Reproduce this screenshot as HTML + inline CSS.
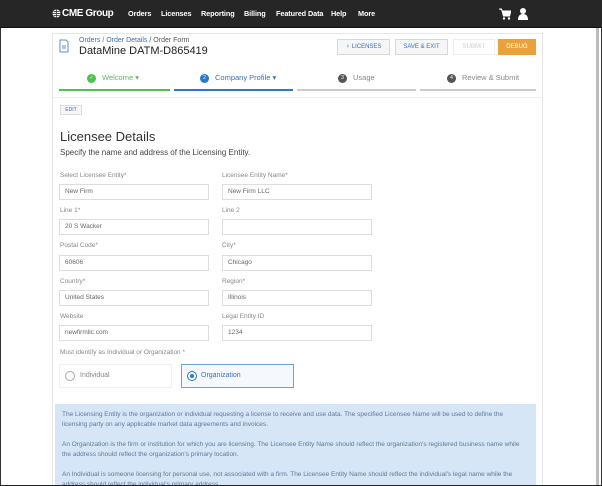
<!DOCTYPE html>
<html style="overflow:hidden;height:486px"><head><meta charset="utf-8"><style>
*{box-sizing:border-box;margin:0;padding:0}
body{width:602px;height:486px;overflow:hidden;background:#fff;font-family:"Liberation Sans",sans-serif;position:relative;color:#333}
.a{position:absolute}
.nav{left:0;top:0;width:602px;height:28px;background:#262626;border-bottom:1px solid #111}
.nav span{position:absolute;top:9px;color:#fff;font-size:7.3px;font-weight:bold;letter-spacing:-0.1px}
.card{left:52px;top:33px;width:491px;height:453px;border:1px solid #e6e6e6;border-bottom:none;background:#fff}
.btn{position:absolute;top:39px;height:16px;border:1px solid #d8d8d8;background:#f4f6f8;font-size:6px;color:#3b6fb8;text-align:center;line-height:14px}
.step{position:absolute;top:73px;font-size:7.5px;color:#888}
.bar{position:absolute;top:89px;height:2px;background:#ccc}
.num{display:inline-block;width:9px;height:9px;border-radius:50%;background:#555;color:#fff;font-size:5px;text-align:center;line-height:9px;vertical-align:middle;margin-right:6px}
.lbl{position:absolute;font-size:6.5px;color:#888}
.inp{position:absolute;width:150px;height:16px;border:1px solid #ddd;font-size:6.5px;color:#666;padding-left:5px;line-height:14px}
.info{left:55px;top:404px;width:481px;height:81px;overflow:hidden;background:#d6e6f6;font-size:6.5px;color:#5b7a9a;padding:6px 7px;line-height:10px}
.info p{margin-bottom:10px}
</style></head><body>
<div class="a nav">
<svg class="a" style="left:52px;top:9px" width="9" height="9"><circle cx="4.5" cy="4.5" r="4" fill="#fff"/><path d="M0.5 4.5h8M4.5 0.5v8M1.5 2.5h6M1.5 6.5h6" stroke="#262626" stroke-width="0.7"/></svg>
<span style="left:62px;font-size:10px;top:8px;font-weight:bold;letter-spacing:-0.4px">CME Group</span>
<span style="left:128px">Orders</span><span style="left:161px">Licenses</span><span style="left:201px">Reporting</span><span style="left:244px">Billing</span><span style="left:276px">Featured Data</span><span style="left:331px">Help</span><span style="left:358px">More</span>
<svg class="a" style="left:499px;top:8px" width="12" height="12"><path d="M0 1h2.5l2 7h6l1.5-5H3.5" fill="#fff" stroke="#fff" stroke-width="1"/><rect x="4" y="3" width="7" height="4" fill="#fff"/><circle cx="5" cy="10.5" r="1.2" fill="#fff"/><circle cx="10" cy="10.5" r="1.2" fill="#fff"/></svg>
<svg class="a" style="left:518px;top:8px" width="10" height="12"><circle cx="5" cy="3" r="3" fill="#fff"/><path d="M0 12 Q0 6 5 6 Q10 6 10 12Z" fill="#fff"/></svg>
</div>
<div class="a" style="left:0;top:28px;width:1px;height:458px;background:#333"></div>
<div class="a" style="left:601px;top:28px;width:1px;height:458px;background:#333"></div>
<div class="a" style="left:596px;top:28px;width:3px;height:458px;background:#bbb"></div>
<div class="a card"></div>
<svg class="a" style="left:59px;top:39px" width="10" height="14"><path d="M1 1h6l2 2v10H1z" fill="#fff" stroke="#5a8fd0"/><path d="M3 7h4M3 9h4" stroke="#5a8fd0"/></svg>
<div class="a" style="left:79px;top:37px;font-size:7px;color:#3b6fb8">Orders / Order Details <span style="color:#555">/ Order Form</span></div>
<div class="a" style="left:79px;top:45px;font-size:11px;color:#222">DataMine DATM-D865419</div>
<div class="btn" style="left:337px;width:53px">♀ LICENSES</div>
<div class="btn" style="left:395px;width:53px">SAVE &amp; EXIT</div>
<div class="btn" style="left:453px;width:42px;background:#fff;color:#ccc;border-color:#eee">SUBMIT</div>
<div class="btn" style="left:498px;width:38px;background:#e8a23c;border-color:#e8a23c;color:#fff">DEBUG</div>
<div class="step" style="left:87px;color:#5cb85c"><span class="num" style="background:#4cc34c">✓</span>Welcome ▾</div>
<div class="step" style="left:200px;color:#3b6fb8"><span class="num" style="background:#2a78c8">2</span>Company Profile ▾</div>
<div class="step" style="left:338px"><span class="num">3</span>Usage</div>
<div class="step" style="left:447px"><span class="num">4</span>Review &amp; Submit</div>
<div class="bar" style="left:59px;width:111px;background:#4cc34c"></div>
<div class="bar" style="left:174px;width:119px;background:#2a78c8"></div>
<div class="bar" style="left:297px;width:119px"></div>
<div class="bar" style="left:420px;width:116px"></div>
<div class="a" style="left:53px;top:97px;width:489px;height:1px;background:#eee"></div>
<div class="a" style="left:60px;top:105px;width:22px;height:10px;border:1px solid #ddd;background:#f4f6f8;font-size:5px;color:#3b6fb8;text-align:center;line-height:8px">EDIT</div>
<div class="a" style="left:60px;top:129px;font-size:13px;color:#333">Licensee Details</div>
<div class="a" style="left:60px;top:148px;font-size:8px;color:#444">Specify the name and address of the Licensing Entity.</div>
<div class="lbl" style="left:60px;top:172px">Select Licensee Entity*</div><div class="lbl" style="left:222px;top:172px">Licensee Entity Name*</div>
<div class="inp" style="left:59px;top:184px">New Firm</div><div class="inp" style="left:222px;top:184px">New Firm LLC</div>
<div class="lbl" style="left:60px;top:207px">Line 1*</div><div class="lbl" style="left:222px;top:207px">Line 2</div>
<div class="inp" style="left:59px;top:219px">20 S Wacker</div><div class="inp" style="left:222px;top:219px"></div>
<div class="lbl" style="left:60px;top:242px">Postal Code*</div><div class="lbl" style="left:222px;top:242px">City*</div>
<div class="inp" style="left:59px;top:255px">60606</div><div class="inp" style="left:222px;top:255px">Chicago</div>
<div class="lbl" style="left:60px;top:278px">Country*</div><div class="lbl" style="left:222px;top:278px">Region*</div>
<div class="inp" style="left:59px;top:290px">United States</div><div class="inp" style="left:222px;top:290px">Illinois</div>
<div class="lbl" style="left:60px;top:313px">Website</div><div class="lbl" style="left:222px;top:313px">Legal Entity ID</div>
<div class="inp" style="left:59px;top:325px">newfirmllc.com</div><div class="inp" style="left:222px;top:325px">1234</div>
<div class="lbl" style="left:60px;top:349px">Must identify as Individual or Organization *</div>
<div class="a" style="left:59px;top:364px;width:113px;height:24px;border:1px solid #f0f0f0"></div>
<div class="a" style="left:65px;top:371px;width:10px;height:10px;border-radius:50%;border:1px solid #aaa"></div>
<div class="a" style="left:80px;top:372px;font-size:7px;color:#888">Individual</div>
<div class="a" style="left:181px;top:364px;width:113px;height:24px;border:1px solid #6fa3d8;background:#f5f9fd"></div>
<div class="a" style="left:187px;top:371px;width:10px;height:10px;border-radius:50%;border:1px solid #2a78c8"></div>
<div class="a" style="left:190px;top:374px;width:4px;height:4px;border-radius:50%;background:#2a78c8"></div>
<div class="a" style="left:201px;top:372px;font-size:7px;color:#3b6fb8">Organization</div>
<div class="a info"><p>The Licensing Entity is the organization or individual requesting a license to receive and use data. The specified Licensee Name will be used to define the licensing party on any applicable market data agreements and invoices.</p><p>An Organization is the firm or institution for which you are licensing. The Licensee Entity Name should reflect the organization's registered business name while the address should reflect the organization's primary location.</p><p>An Individual is someone licensing for personal use, not associated with a firm. The Licensee Entity Name should reflect the individual's legal name while the address should reflect the individual's primary address.</p></div>
<div class="a" style="left:0;top:485px;width:602px;height:1px;background:#222"></div>
</body></html>
